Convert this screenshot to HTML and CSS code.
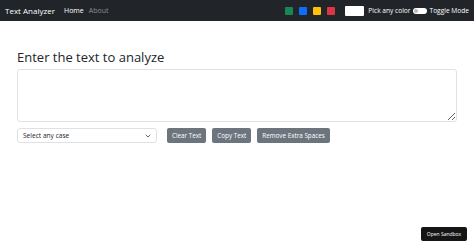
FILE: index.html
```html
<!DOCTYPE html>
<html lang="en">
<head>
  <meta charset="UTF-8">
  <title>Text Analyzer</title>
  <link rel="stylesheet" href="styles.css">
</head>
<body>

  <nav class="navbar">
    <a class="brand" href="#">Text Analyzer</a>
    <a class="nav-link active" href="#">Home</a>
    <a class="nav-link" href="#">About</a>

    <div class="nav-right">
      <span class="swatch green"></span>
      <span class="swatch blue"></span>
      <span class="swatch yellow"></span>
      <span class="swatch red"></span>
      <span class="color-input"></span>
      <span class="nav-label">Pick any color</span>
      <span class="switch"><span class="knob"></span></span>
      <span class="nav-label">Toggle Mode</span>
    </div>
  </nav>

  <main class="container">
    <h1>Enter the text to analyze</h1>
    <textarea class="text-box"></textarea>

    <div class="controls">
      <div class="select-case">
        <span>Select any case</span>
        <svg width="6" height="4" viewBox="0 0 6 4"><path d="M0.7 0.8 L3 3 L5.3 0.8" fill="none" stroke="#555" stroke-width="0.9"/></svg>
      </div>
      <button class="btn">Clear Text</button>
      <button class="btn">Copy Text</button>
      <button class="btn">Remove Extra Spaces</button>
    </div>
  </main>

  <button class="sandbox-btn">Open Sandbox</button>

</body>
</html>
```

FILE: styles.css
```css
* { box-sizing: border-box; margin: 0; padding: 0; }

body {
  font-family: "Open Sans", "Noto Sans", sans-serif;
  background-color: #fff;
  color: #212529;
  width: 474px;
  height: 248px;
  overflow: hidden;
}

.navbar {
  height: 21px;
  background-color: #212529;
  display: flex;
  align-items: center;
  padding: 0 5px;
}

.brand {
  color: #fff;
  text-decoration: none;
  font-size: 8px;
  margin-right: 9px;
}

.nav-link {
  color: #8c8f93;
  text-decoration: none;
  font-size: 7px;
  margin-right: 5px;
}

.nav-link.active {
  color: #fff;
}

.nav-right {
  margin-left: auto;
  display: flex;
  align-items: center;
}

.swatch {
  width: 8px;
  height: 8px;
  border-radius: 1px;
  margin-left: 6px;
}

.green { background-color: #198754; }
.blue { background-color: #0d6efd; }
.yellow { background-color: #ffc107; }
.red { background-color: #dc3545; }

.color-input {
  width: 19px;
  height: 10px;
  background: #fff;
  border-radius: 1px;
  margin-left: 10px;
  margin-right: 4px;
}

.nav-label {
  color: #fff;
  font-size: 6.6px;
}

.switch {
  width: 14px;
  height: 6px;
  border-radius: 3px;
  background: #fff;
  margin: 0 3px 0 2px;
  position: relative;
}

.knob {
  position: absolute;
  left: 1px;
  top: 1px;
  width: 4px;
  height: 4px;
  border-radius: 50%;
  background: #bbb;
}

.container {
  padding: 0 17px;
}

h1 {
  font-size: 13px;
  font-weight: 400;
  margin-top: 28px;
  margin-bottom: 4px;
  line-height: 16px;
}

.text-box {
  display: block;
  width: 440px;
  height: 53px;
  border: 1px solid #dee2e6;
  border-radius: 3px;
  resize: vertical;
}

.controls {
  display: flex;
  align-items: center;
  margin-top: 6px;
}

.select-case {
  width: 140px;
  height: 15px;
  border: 1px solid #dee2e6;
  border-radius: 3px;
  display: flex;
  align-items: center;
  justify-content: space-between;
  padding: 0 5px;
  font-size: 6.6px;
  color: #212529;
  margin-right: 10px;
}

.btn {
  font-family: inherit;
  height: 15px;
  background-color: #6c757d;
  color: #fff;
  border: none;
  border-radius: 2px;
  font-size: 6.3px;
  padding: 0 5px;
  margin-right: 6px;
}

.sandbox-btn {
  position: fixed;
  right: 7px;
  bottom: 7px;
  width: 46px;
  height: 14px;
  background-color: #151515;
  color: #fff;
  border: none;
  border-radius: 2px;
  font-family: inherit;
  font-size: 5px;
}
```
